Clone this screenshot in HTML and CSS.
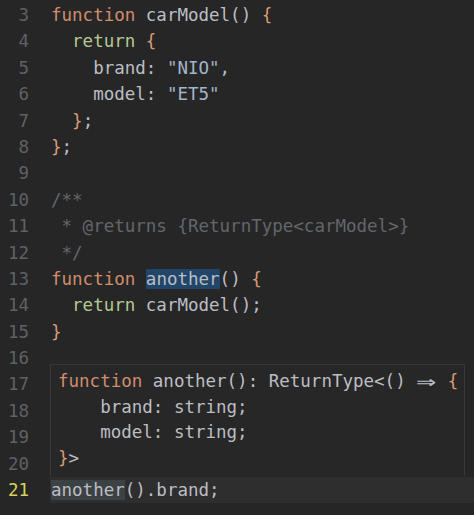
FILE: index.html
```html
<!DOCTYPE html>
<html>
<head>
<meta charset="utf-8">
<link rel="stylesheet" href="styles.css">
</head>
<body>
<div class="editor">
  <div class="row"><span class="ln">3</span><span class="code"><span class="kw">function</span> carModel() <span class="br">{</span></span></div>
  <div class="row"><span class="ln">4</span><span class="code">  <span class="ret">return</span> <span class="br">{</span></span></div>
  <div class="row"><span class="ln">5</span><span class="code">    brand: <span class="str">"NIO"</span>,</span></div>
  <div class="row"><span class="ln">6</span><span class="code">    model: <span class="str">"ET5"</span></span></div>
  <div class="row"><span class="ln">7</span><span class="code">  <span class="br">}</span>;</span></div>
  <div class="row"><span class="ln">8</span><span class="code"><span class="br">}</span>;</span></div>
  <div class="row"><span class="ln">9</span><span class="code"></span></div>
  <div class="row"><span class="ln">10</span><span class="code cm">/**</span></div>
  <div class="row"><span class="ln">11</span><span class="code cm"> * @returns {ReturnType&lt;carModel&gt;}</span></div>
  <div class="row"><span class="ln">12</span><span class="code cm"> */</span></div>
  <div class="row"><span class="ln">13</span><span class="code"><span class="kw">function</span> <span class="hl-blue">another</span>() <span class="br">{</span></span></div>
  <div class="row"><span class="ln">14</span><span class="code">  <span class="ret">return</span> carModel();</span></div>
  <div class="row"><span class="ln">15</span><span class="code"><span class="br">}</span></span></div>
  <div class="row"><span class="ln">16</span><span class="code"></span></div>
  <div class="row"><span class="ln">17</span><span class="code"></span></div>
  <div class="row"><span class="ln">18</span><span class="code"></span></div>
  <div class="row"><span class="ln">19</span><span class="code"></span></div>
  <div class="row"><span class="ln">20</span><span class="code"></span></div>
  <div class="row current"><span class="ln">21</span><span class="code"><span class="hl-grey">another</span>().brand;</span></div>

  <div class="popup">
    <div class="pline"><span class="kw">function</span> another(): ReturnType&lt;() <span class="lig"><span class="lig-glyph">⇒</span></span> <span class="br">{</span></div>
    <div class="pline">    brand: string;</div>
    <div class="pline">    model: string;</div>
    <div class="pline"><span class="br">}</span>&gt;</div>
  </div>
</div>
</body>
</html>
```

FILE: styles.css
```css
html, body {
  margin: 0;
  padding: 0;
  background: #262626;
}

.editor {
  position: relative;
  height: 515px;
  overflow: hidden;
  padding-top: 2px;
  box-sizing: border-box;
  font-family: "DejaVu Sans Mono", "Liberation Mono", monospace;
  font-size: 17.5px;
  color: #bcbec4;
}

.row {
  display: flex;
  height: 26.4px;
  line-height: 26.4px;
  white-space: pre;
}

.ln {
  width: 29px;
  text-align: right;
  color: #5e6166;
  flex: none;
}

.code {
  margin-left: 21px;
  padding-left: 1px;
  flex: 1;
}

.current .code {
  background: #2e2e2e;
}

.current .ln {
  color: #d8d35a;
}

.kw { color: #cf8e6d; }
.ret { color: #b7c892; }
.br { color: #d99a76; }
.str { color: #a3b5cc; }
.cm { color: #63666c; }

.hl-blue {
  background: #21466a;
}

.hl-grey {
  background: #3c4144;
}

.popup {
  position: absolute;
  left: 50px;
  top: 364px;
  width: 415px;
  height: 112px;
  box-sizing: border-box;
  padding: 4px 7px 0 7px;
  background: #272727;
  border: 1px solid #393939;
  border-bottom: none;
}

.pline {
  height: 25.7px;
  line-height: 25.7px;
  white-space: pre;
}

.lig {
  display: inline-block;
  width: 2ch;
  text-align: center;
}

.lig-glyph {
  display: inline-block;
  transform: scale(1.9, 1.35);
}
```
